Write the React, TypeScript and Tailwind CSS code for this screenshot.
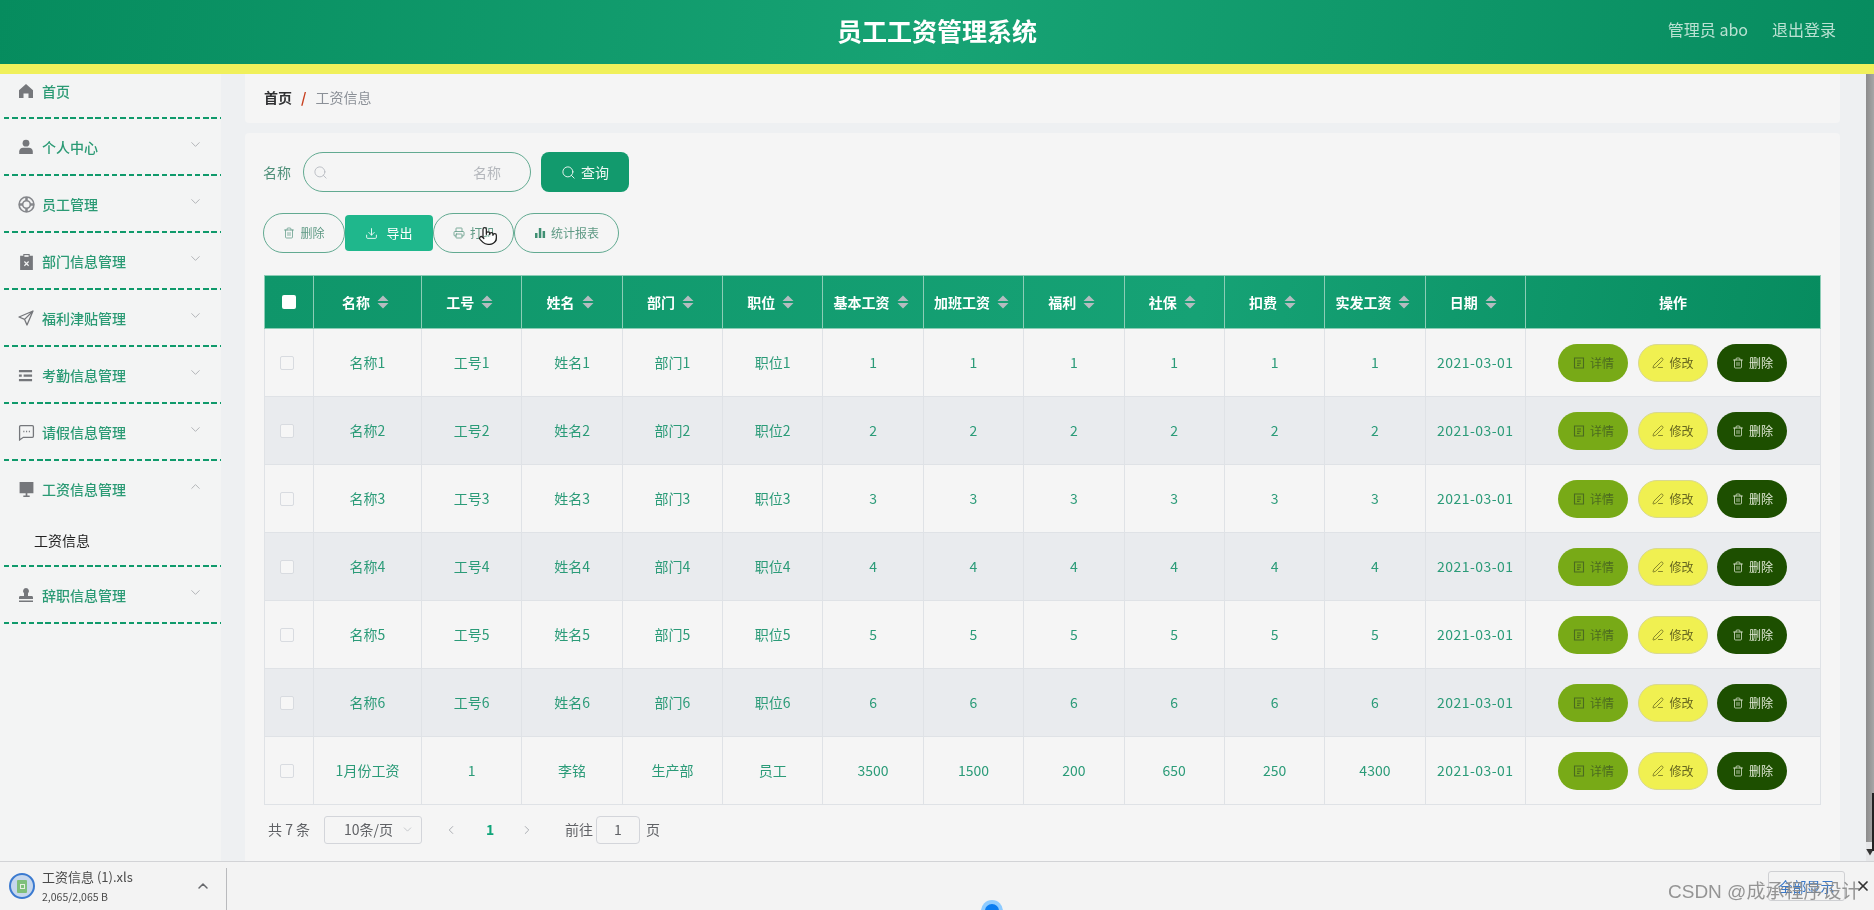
import { ChevronDown, ChevronLeft, ChevronRight, ChevronUp, Download, PenLine, Pointer, Printer, Search, Trash2, X } from "lucide-react";
import type { ReactNode } from "react";

const HomeIcon = () => (
  <svg viewBox="0 0 16 16" className="h-[16px] w-[16px] fill-[#75777b]">
    <path d="M8 1 1 7.2V15h4.5v-4.5h5V15H15V7.2L8 1Z" />
  </svg>
);
const UserIcon = () => (
  <svg viewBox="0 0 16 16" className="h-[16px] w-[16px] fill-[#75777b]">
    <circle cx="8" cy="4.2" r="3.4" />
    <path d="M1.2 15v-2.6c0-2.2 1.8-3.7 3.8-3.7h6c2 0 3.8 1.5 3.8 3.7V15H1.2Z" />
  </svg>
);
const HelpIcon = () => (
  <svg viewBox="0 0 16 16" className="h-[17px] w-[17px] fill-none stroke-[#85878b] stroke-[1.5]">
    <circle cx="8" cy="8" r="7" />
    <circle cx="8" cy="8" r="3.6" />
    <path d="M8 1v3.4M8 11.6V15M1 8h3.4M11.6 8H15" strokeWidth="2.4" />
  </svg>
);
const ClaimIcon = () => (
  <svg viewBox="0 0 16 16" className="h-[17px] w-[17px] fill-[#75777b]">
    <path d="M2 2.5h3V1h6v1.5h3V16H2V2.5Z" />
    <path d="m6 8 4 4m0-4-4 4" stroke="#f3f4f4" strokeWidth="1.1" />
    <rect x="6" y="2" width="4" height="1.6" fill="#f3f4f4" />
  </svg>
);
const SendIcon = () => (
  <svg viewBox="0 0 16 16" className="h-[16px] w-[16px] fill-none stroke-[#75777b] stroke-[1.3]">
    <path d="M15 1 1 7l5.6 2.4L9 15 15 1ZM6.6 9.4 15 1" strokeLinejoin="round" />
  </svg>
);
const OperationIcon = () => (
  <svg viewBox="0 0 16 16" className="h-[15px] w-[15px] fill-[#75777b]">
    <path d="M1 2h14v2.4H1zM1 6.8h3v2.4H1zM6 6.8h9v2.4H6zM1 11.6h14V14H1z" />
  </svg>
);
const ChatIcon = () => (
  <svg viewBox="0 0 16 16" className="h-[17px] w-[17px] fill-none stroke-[#75777b] stroke-[1.2]">
    <path d="M2.5 1.5h11a1 1 0 0 1 1 1v9a1 1 0 0 1-1 1H5L1.5 15V2.5a1 1 0 0 1 1-1Z" />
    <path d="M5 7h1M7.6 7h1M10.2 7h1" strokeWidth="1.4" />
  </svg>
);
const MonitorIcon = () => (
  <svg viewBox="0 0 16 16" className="h-[17px] w-[17px] fill-[#75777b]">
    <path d="M1.500 1h13v10.600h-13zM5 13.600h6V15H5zM7.200 11.600h1.600v2H7.200z" />
  </svg>
);
const StampIcon = () => (
  <svg viewBox="0 0 16 16" className="h-[16px] w-[16px] fill-[#75777b]">
    <path d="M8 1a3 3 0 0 1 2 5.200V9h3.600c.8 0 1.400.6 1.400 1.400V12H1v-1.600C1 9.600 1.600 9 2.400 9H6V6.200A3 3 0 0 1 8 1ZM1 13.400h14V15H1z" />
  </svg>
);
const BarsIcon = () => (
  <svg viewBox="0 0 12 12" className="h-[12px] w-[12px] fill-[#3f8f72]">
    <path d="M1 6h2.500v5H1zM4.800 1h2.500v10H4.800zM8.600 4h2.500v7H8.600z" />
  </svg>
);
const TicketIcon = () => (
  <svg viewBox="0 0 12 12" className="h-[12px] w-[12px] fill-none stroke-current stroke-[1.1]">
    <path d="M1.500 1h9v10h-9zM4 4h4M4 6.200h4M4 8.400h2.500" />
  </svg>
);
const Caret = () => (
  <svg viewBox="0 0 12 14" className="h-[14px] w-[12px] fill-[#b4bcc0]">
    <path d="M6 0.500 11.500 6H.5L6 0.500ZM6 13.500.5 8h11L6 13.500Z" />
  </svg>
);

const menu: { title: string; icon: ReactNode }[] = [
  { title: "个人中心", icon: <UserIcon /> },
  { title: "员工管理", icon: <HelpIcon /> },
  { title: "部门信息管理", icon: <ClaimIcon /> },
  { title: "福利津贴管理", icon: <SendIcon /> },
  { title: "考勤信息管理", icon: <OperationIcon /> },
  { title: "请假信息管理", icon: <ChatIcon /> },
];

const columns = ["名称", "工号", "姓名", "部门", "职位", "基本工资", "加班工资", "福利", "社保", "扣费", "实发工资", "日期"];

const rows = [
  ...[1, 2, 3, 4, 5, 6].map((n) => [`名称${n}`, `工号${n}`, `姓名${n}`, `部门${n}`, `职位${n}`, `${n}`, `${n}`, `${n}`, `${n}`, `${n}`, `${n}`, "2021-03-01"]),
  ["1月份工资", "1", "李铭", "生产部", "员工", "3500", "1500", "200", "650", "250", "4300", "2021-03-01"],
];

function Dashes() {
  return <div className="ml-[4px] h-[2px] w-[217px] shrink-0 bg-[repeating-linear-gradient(90deg,#0f9a6b_0_5.500px,transparent_5.500px_8.300px)]" />;
}

function MenuRow({ title, icon, open }: { title: string; icon: ReactNode; open?: boolean }) {
  return (
    <div className="flex h-[55px] items-center pt-[1px] pl-[18px] pr-[18px]">
      <span className="flex w-[24px] shrink-0">{icon}</span>
      <span className="flex-1 text-[14px] font-medium text-[#2a9a74]">{title}</span>
      {open ? (
        <ChevronUp className="-mt-[6px] h-[15px] w-[15px] text-[#a9abaf]" strokeWidth={1.4} />
      ) : (
        <ChevronDown className="-mt-[6px] h-[15px] w-[15px] text-[#a9abaf]" strokeWidth={1.4} />
      )}
    </div>
  );
}

function Sidebar() {
  return (
    <aside className="flex w-[221px] shrink-0 flex-col bg-[#f3f4f4]">
      <div className="flex h-[43px] items-center pb-[9px] pl-[18px]">
        <span className="flex w-[24px] shrink-0">
          <HomeIcon />
        </span>
        <span className="text-[14px] font-medium text-[#2a9a74]">首页</span>
      </div>
      <Dashes />
      {menu.map((item) => (
        <div key={item.title}>
          <MenuRow title={item.title} icon={item.icon} />
          <Dashes />
        </div>
      ))}
      <MenuRow title="工资信息管理" icon={<MonitorIcon />} open />
      <div className="flex h-[49px] items-center pl-[34px] text-[14px] text-[#222]">工资信息</div>
      <Dashes />
      <MenuRow title="辞职信息管理" icon={<StampIcon />} />
      <Dashes />
    </aside>
  );
}

function PillButton({ className, children }: { className: string; children: ReactNode }) {
  return (
    <button className={`flex h-[40px] items-center justify-center gap-[5px] rounded-full border-[1.5px] border-[#62aa91] bg-[#f5f5f5] text-[12px] text-[#5f9a85] ${className}`}>
      {children}
    </button>
  );
}

function Toolbar() {
  return (
    <div className="-ml-[1px]">
      <div className="flex h-[40px] items-center">
        <span className="w-[40px] text-[14px] text-[#4f8f79]">名称</span>
        <div className="flex h-[40px] w-[228px] items-center rounded-full border-[1.5px] border-[#62aa91] pl-[9px] pr-[29px]">
          <Search className="h-[15px] w-[15px] shrink-0 text-[#b9bcc2]" strokeWidth={1.5} />
          <input placeholder="名称" className="w-full bg-transparent text-right text-[14px] outline-none placeholder:text-[#b4b7bc]" />
        </div>
        <button className="ml-[10px] flex h-[40px] w-[88px] items-center justify-center gap-[5px] rounded-[8px] bg-[#129a6d] text-[14px] text-[#eef7f3]">
          <Search className="h-[15px] w-[15px]" strokeWidth={1.5} />
          查询
        </button>
      </div>
      <div className="mt-[21px] flex h-[40px] items-center">
        <PillButton className="w-[82px]">
          <Trash2 className="h-[12px] w-[12px]" strokeWidth={1.5} />
          删除
        </PillButton>
        <button className="flex h-[36px] w-[88px] items-center justify-center gap-[8px] rounded-[4px] bg-[#1fb78c] text-[13px] text-white">
          <Download className="h-[13px] w-[13px]" strokeWidth={1.6} />
          导出
        </button>
        <PillButton className="w-[81px]">
          <Printer className="h-[12px] w-[12px]" strokeWidth={1.6} />
          打印
        </PillButton>
        <PillButton className="w-[105px]">
          <BarsIcon />
          统计报表
        </PillButton>
      </div>
    </div>
  );
}

function RowButtons() {
  return (
    <div className="flex items-center justify-center gap-[9.500px] text-[12px]">
      <button className="flex h-[38px] w-[70px] items-center justify-center gap-[5px] rounded-full bg-[#78aa17] text-[#4b6a20]">
        <TicketIcon />
        详情
      </button>
      <button className="flex h-[38px] w-[70px] items-center justify-center gap-[5px] rounded-full border border-[#d9d98f] bg-[#f0f051] text-[#66661f]">
        <PenLine className="h-[12px] w-[12px]" strokeWidth={1.5} />
        修改
      </button>
      <button className="flex h-[38px] w-[70px] items-center justify-center gap-[5px] rounded-full bg-[#1d4f00] text-[#e2ead6]">
        <Trash2 className="h-[12px] w-[12px]" strokeWidth={1.5} />
        删除
      </button>
    </div>
  );
}

function SalaryTable() {
  return (
    <table className="mt-[22px] w-[1556px] table-fixed border-collapse text-[14px]">
      <colgroup>
        <col className="w-[49px]" />
        <col className="w-[108px]" />
        {columns.slice(1).map((c) => (
          <col key={c} className="w-[100.360px]" />
        ))}
        <col className="w-[295px]" />
      </colgroup>
      <thead>
        <tr className="h-[53px] bg-[linear-gradient(100deg,#0f966a,#16a275_60%,#078c5f)] text-white">
          <th className="border border-[#8ccdb6]">
            <span className="ml-[17px] block h-[14px] w-[14px] rounded-[2px] bg-white" />
          </th>
          {columns.map((c) => (
            <th key={c} className="border border-[#8ccdb6] font-bold">
              <span className="flex items-center justify-center gap-[7px] pr-[4px]">
                {c}
                <Caret />
              </span>
            </th>
          ))}
          <th className="border border-[#8ccdb6] font-bold">操作</th>
        </tr>
      </thead>
      <tbody>
        {rows.map((row, i) => (
          <tr key={i} className={i % 2 === 0 ? "h-[68px] bg-[#f5f5f5]" : "h-[68px] bg-[#e9ebee]"}>
            <td className="border border-[#dfe2e6]">
              <span className="ml-[15px] block h-[14px] w-[14px] rounded-[2px] border border-[#d8dbe0] bg-[#f6f6f6]" />
            </td>
            {row.map((cell, j) => (
              <td key={j} className={j === 11 ? "border border-[#dfe2e6] text-center tracking-[0.45px] text-[#2b9b78]" : "border border-[#dfe2e6] text-center text-[#2b9b78]"}>
                {cell}
              </td>
            ))}
            <td className="border border-[#dfe2e6]">
              <RowButtons />
            </td>
          </tr>
        ))}
      </tbody>
    </table>
  );
}

function Pagination() {
  return (
    <div className="mt-[11px] flex h-[27px] items-center text-[14px] text-[#606266]">
      <span className="ml-[4px] w-[56px]">共 7 条</span>
      <div className="flex h-[28px] w-[98px] items-center justify-between rounded-[3px] border border-[#d3d5da] pl-[19px] pr-[7px]">
        10条/页
        <ChevronDown className="h-[13px] w-[13px] text-[#b8bbc0]" strokeWidth={1.4} />
      </div>
      <ChevronLeft className="ml-[22px] h-[14px] w-[14px] text-[#a6a9ae]" strokeWidth={1.6} />
      <span className="ml-[28px] w-[25px] font-bold text-[#10a57a]">1</span>
      <ChevronRight className="ml-[9px] h-[14px] w-[14px] text-[#a6a9ae]" strokeWidth={1.6} />
      <span className="ml-[31px]">前往</span>
      <div className="ml-[3px] flex h-[28px] w-[44px] items-center justify-center rounded-[4px] border border-[#d3d5da]">1</div>
      <span className="ml-[6px]">页</span>
    </div>
  );
}

function DownloadBar() {
  return (
    <div className="flex h-[49px] shrink-0 items-center border-t-[1.5px] border-[#d2d3d6] bg-[#f3f3f3] text-[#4a4a4a]">
      <div className="ml-[9px] flex h-[26px] w-[26px] items-center justify-center rounded-full border-2 border-[#3b7ad0] bg-[#c6d7ec]">
        <div className="flex h-[13px] w-[10px] items-center justify-center rounded-[1px] bg-[#7fbf7a]">
          <div className="h-[5px] w-[5px] border border-[#e6f0df]" />
        </div>
      </div>
      <div className="ml-[7px] w-[153px]">
        <div className="text-[13px] leading-[20px]">工资信息 (1).xls</div>
        <div className="text-[10.500px] leading-[19px]">2,065/2,065 B</div>
      </div>
      <ChevronUp className="h-[16px] w-[16px] text-[#66686c]" strokeWidth={2.2} />
      <div className="ml-[15px] h-[42px] w-px self-end bg-[#b9babd]" />
      <div className="flex-1" />
      <button className="flex h-[30px] w-[77px] items-center justify-center rounded-[3px] border border-[#cfd0d3] text-[14px] text-[#3a78c8]">全部显示</button>
      <X className="ml-[10px] mr-[3px] h-[16px] w-[16px] text-[#333]" strokeWidth={2.6} />
    </div>
  );
}

export default function App() {
  return (
    <div className="relative flex h-[910px] w-[1874px] flex-col overflow-hidden bg-[#eef0f2] blur-[0.3px] font-['Noto_Sans_CJK_SC','Liberation_Sans',sans-serif]">
      <header className="grid h-[64px] shrink-0 grid-cols-[1fr_auto_1fr] items-center bg-[linear-gradient(100deg,#068c5e,#17a374_50%,#078c5f)]">
        <div />
        <h1 className="pb-[3px] text-center text-[25px] font-bold text-white">员工工资管理系统</h1>
        <div className="flex justify-end gap-[24px] pb-[6px] pr-[38px] text-[16px] text-[#b9e1d2]">
          <span>管理员 abo</span>
          <span>退出登录</span>
        </div>
      </header>
      <div className="h-[10px] shrink-0 bg-[#f0f05b]" />

      <div className="flex min-h-0 flex-1">
        <Sidebar />
        <main className="ml-[24px] flex w-[1595px] shrink-0 flex-col">
          <div className="flex h-[49px] shrink-0 items-center rounded-b-[4px] bg-[#f5f5f5] pb-[2px] pl-[19px] text-[14px]">
            <span className="font-bold text-[#303133]">首页</span>
            <span className="mx-[9px] font-bold text-[#c8401f]">/</span>
            <span className="text-[#8b9097]">工资信息</span>
          </div>
          <div className="mt-[10px] min-h-0 flex-1 rounded-t-[4px] bg-[#f5f5f5] pl-[19px] pt-[19px]">
            <Toolbar />
            <SalaryTable />
            <Pagination />
          </div>
        </main>
        <div className="relative ml-[26px] flex w-[8px] flex-col">
          <div className="flex-1 bg-[linear-gradient(90deg,#8c8c8c,#a6a6a6)]" />
          <div className="flex h-[19px] items-center justify-center bg-[#e6e7e9] text-[8px] leading-none text-[#333]">▼</div>
          <div className="absolute bottom-[10px] right-0 h-[58px] w-[2px] bg-[#222]" />
        </div>
      </div>

      <DownloadBar />

      {/* mouse pointer and overlays baked into the screen recording */}
      <Pointer className="absolute left-[478px] top-[224px] h-[24px] w-[20px] fill-white text-[#222]" strokeWidth={1.5} />
      <div className="absolute left-[981px] top-[900px] flex h-[22px] w-[22px] items-center justify-center rounded-full bg-[#8ecbff]">
        <div className="h-[14px] w-[14px] rounded-full bg-[#0a7cf0]" />
      </div>
      <div className="absolute left-[1668px] top-[878px] whitespace-nowrap font-['Liberation_Sans','Noto_Sans_CJK_SC',sans-serif] text-[19px] text-[#8a8a8a]/90">
        CSDN @成承程序设计
      </div>
    </div>
  );
}
